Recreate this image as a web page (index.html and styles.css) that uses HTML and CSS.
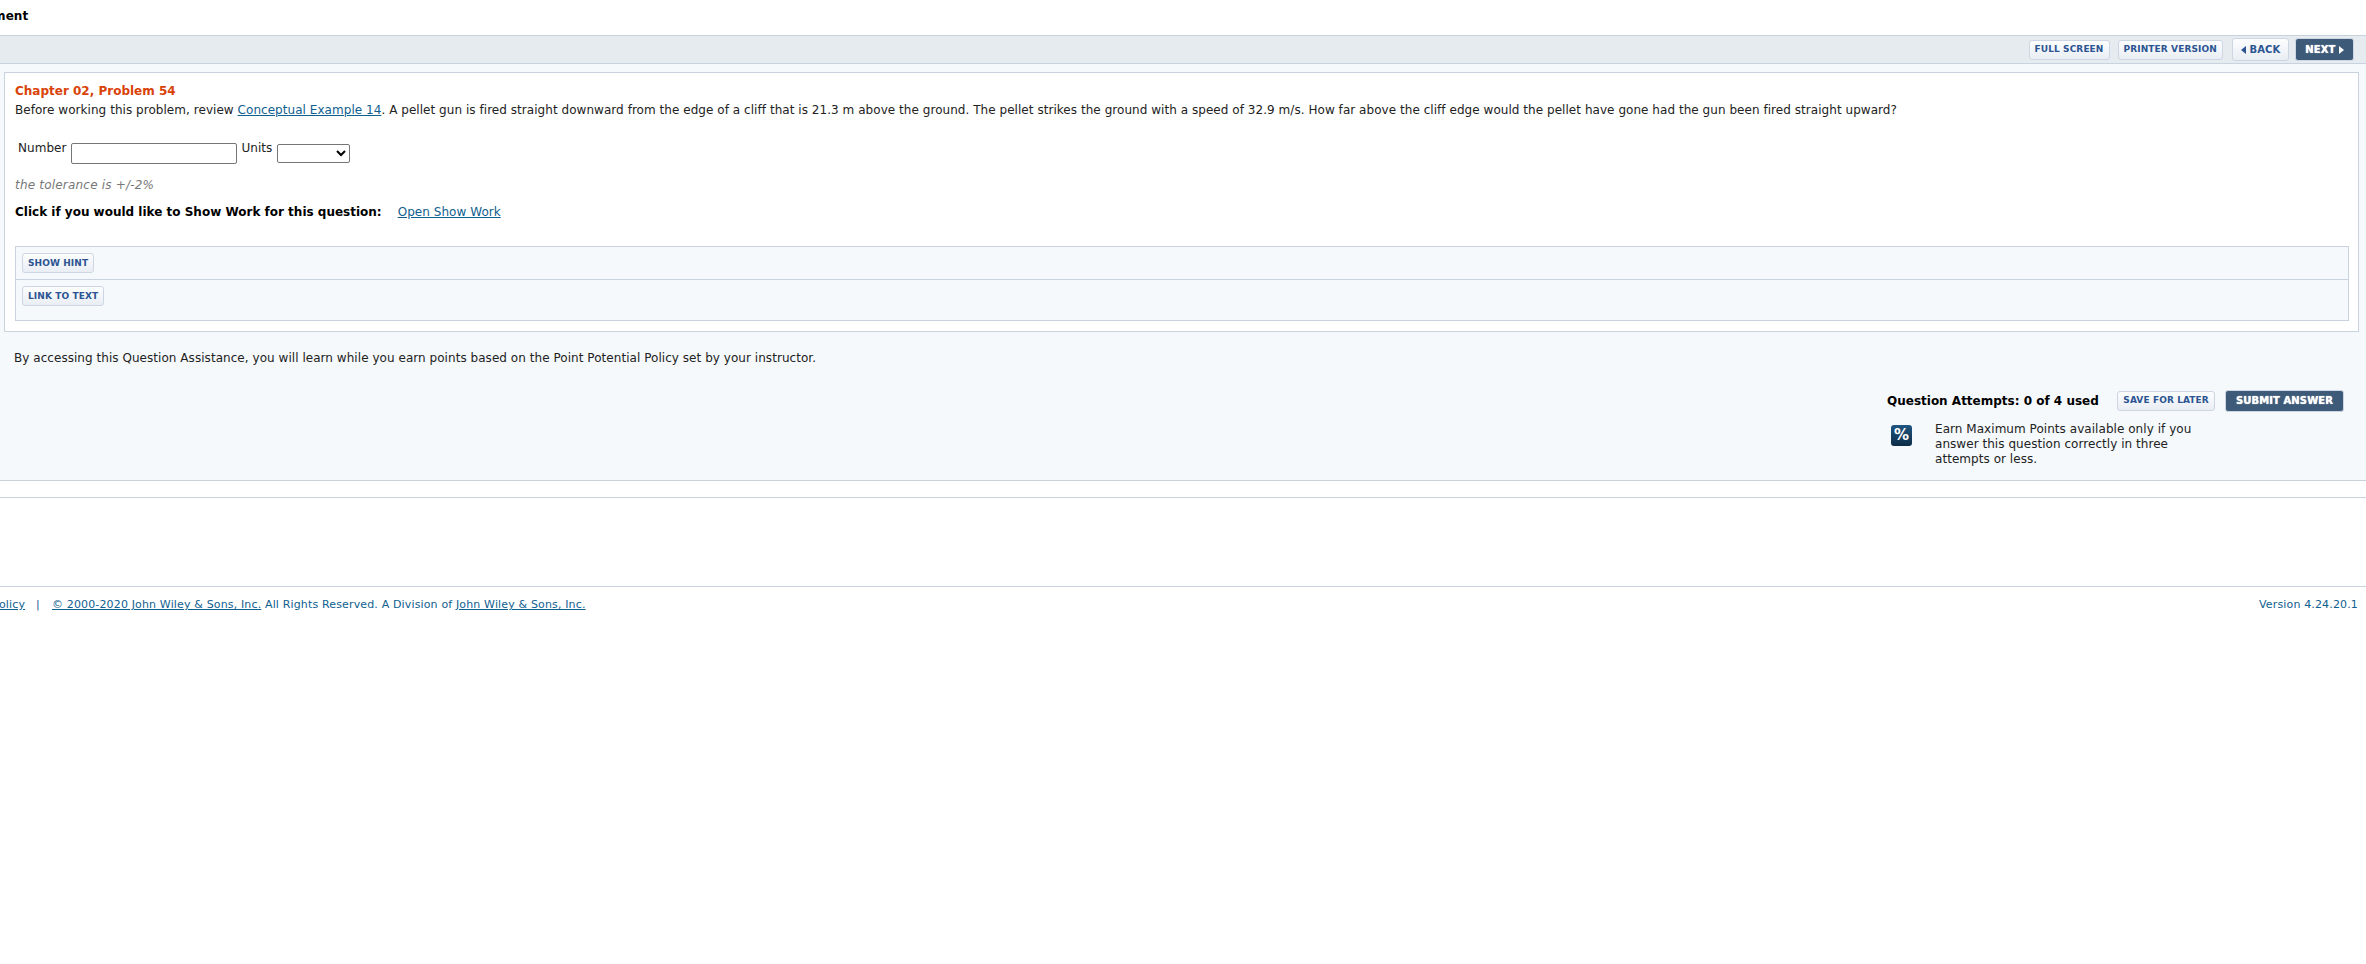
FILE: index.html
```html
<!DOCTYPE html>
<html lang="en">
<head>
<meta charset="utf-8">
<title>Chapter 02, Problem 54</title>
<link rel="stylesheet" href="styles.css">
</head>
<body>
<header class="top"><span class="top-title">Assignment</span></header>
<nav class="toolbar">
  <a class="btn">FULL SCREEN</a>
  <a class="btn">PRINTER VERSION</a>
  <a class="btn btn-big"><svg class="arrow" viewBox="0 0 5 8" width="5" height="8"><path d="M5 0v8L0 4z" fill="#2c5491"/></svg> BACK</a>
  <a class="btn btn-big btn-dark">NEXT <svg class="arrow" viewBox="0 0 5 8" width="5" height="8"><path d="M0 0v8l5-4z" fill="#fff"/></svg></a>
</nav>
<main class="assist">
  <section class="card">
    <h1 class="title">Chapter 02, Problem 54</h1>
    <p class="question">Before working this problem, review <a class="link">Conceptual Example 14</a>. A pellet gun is fired straight downward from the edge of a cliff that is 21.3 m above the ground. The pellet strikes the ground with a speed of 32.9 m/s. How far above the cliff edge would the pellet have gone had the gun been fired straight upward?</p>
    <div class="answer">
      <label class="answer-label">Number</label>
      <input class="number" type="text">
      <label class="answer-label">Units</label>
      <select class="units"><option></option></select>
    </div>
    <p class="tolerance">the tolerance is +/-2%</p>
    <p class="showwork"><b class="strong">Click if you would like to Show Work for this question:</b><a class="link work-link">Open Show Work</a></p>
    <div class="tools">
      <div class="tool-row"><a class="btn">SHOW HINT</a></div>
      <div class="tool-row tool-last"><a class="btn">LINK TO TEXT</a></div>
    </div>
  </section>
  <p class="policy">By accessing this Question Assistance, you will learn while you earn points based on the Point Potential Policy set by your instructor.</p>
  <div class="submit">
    <div class="submit-inner">
      <div class="submit-row">
        <b class="attempts strong">Question Attempts: 0 of 4 used</b>
        <a class="btn">SAVE FOR LATER</a>
        <a class="btn btn-big btn-dark btn-submit">SUBMIT ANSWER</a>
      </div>
      <div class="earn">
        <span class="pct">%</span>
        <span class="earn-text">Earn Maximum Points available only if you answer this question correctly in three attempts or less.</span>
      </div>
    </div>
  </div>
</main>
<div class="spacer"></div>
<footer class="footer">
  <span class="foot-left"><a class="link">Privacy Policy</a><span class="sep">|</span><a class="link">© 2000-2020 John Wiley &amp; Sons, Inc.</a> All Rights Reserved. A Division of <a class="link">John Wiley &amp; Sons, Inc.</a></span>
  <span class="version">Version 4.24.20.1</span>
</footer>
</body>
</html>
```
FILE: styles.css
```css
html, body { margin: 0; padding: 0; background: #fff; overflow: hidden; }
body { font: 12px/15px Verdana, "DejaVu Sans", sans-serif; letter-spacing: .045px; color: #222; height: 964px; }
.top { height: 35px; border-bottom: 1px solid #c9d2dc; overflow: hidden; }
.top-title { display: block; margin-left: -52px; padding-top: 9px; font-weight: bold; color: #000; }
.toolbar { height: 27px; background: #e6ebef; border-bottom: 1px solid #c9d3e0; display: flex; justify-content: flex-end; align-items: center; gap: 8px; padding-right: 12px; }
.btn { display: inline-block; box-sizing: border-box; height: 20px; line-height: 17px; padding: 0 5px; border: 1px solid #cdd6e2; border-radius: 3px; background: linear-gradient(#fcfdfe, #e9eef4); color: #2c5491; font-size: 9px; letter-spacing: .1px; font-weight: bold; white-space: nowrap; }
.toolbar .btn-big { height: 23px; line-height: 21px; padding: 0 8px; margin-left: 1px; font-size: 10px; }
.btn-dark { background: #3d5b78; border-color: #cdd6e2; color: #fff; text-shadow: 0 0 1px #fff; }
.toolbar .btn-dark { margin-left: -2px; padding: 0 9px; }
.arrow { vertical-align: -0.5px; }
.assist { background: #f5f9fc; height: 417px; border-bottom: 1px solid #c9d2dc; padding-top: 8px; box-sizing: border-box; }
.card { margin: 0 7px 0 4px; height: 260px; box-sizing: border-box; border: 1px solid #c9d3e0; background: #fff; padding: 11px 9px 0 10px; }
.title { margin: 0; font-size: 12px; line-height: 15px; font-weight: bold; letter-spacing: 0; color: #d9430a; }
.question { margin: 4px 0 0; }
.link { color: #10608f; text-decoration: underline; }
.answer { display: flex; align-items: flex-start; margin: 25px 0 0 3px; height: 35px; }
.answer-label { margin-top: -2px; }
.number { box-sizing: border-box; width: 166px; height: 21px; margin: 0 4px 0 5px; padding: 0; border: 1px solid #767676; border-radius: 2px; background: #fff; }
.units { box-sizing: border-box; width: 73px; height: 19px; margin: 1px 0 0 5px; border: 1px solid #767676; border-radius: 2px; background: #fff; }
.tolerance { margin: 0; font-style: italic; letter-spacing: .2px; color: #777; }
.showwork { margin: 12px 0 0; color: #000; }
.strong { letter-spacing: 0; }
.work-link { margin-left: 16px; }
.tools { margin-top: 26px; height: 75px; box-sizing: border-box; border: 1px solid #c9d3e0; background: #f5f9fc; }
.tool-row { height: 33px; box-sizing: border-box; border-bottom: 1px solid #c9d3e0; padding: 6px 0 0 6px; }
.tool-row .btn { line-height: 18px; }
.tool-last { border-bottom: 0; }
.policy { margin: 19px 0 0 14px; }
.submit { display: flex; justify-content: flex-end; margin-top: 24px; padding-right: 22px; }
.submit-inner { width: 457px; }
.submit-row { display: flex; align-items: center; }
.attempts { color: #000; width: 231px; }
.btn-submit { margin-left: 10px; height: 22px; line-height: 20px; padding: 0 10px; font-size: 10px; }
.earn { display: flex; margin-top: 10px; }
.pct { box-sizing: border-box; width: 21px; height: 21px; margin: 3px 0 0 4px; border-radius: 3px; background: linear-gradient(#1f5681, #0d2c47); color: #fff; font-size: 15px; line-height: 20px; font-weight: bold; text-align: center; letter-spacing: 0; }
.earn-text { width: 265px; margin-left: 23px; }
.spacer { height: 16px; border-bottom: 1px solid #c9d2dc; }
.footer { display: flex; justify-content: space-between; margin-top: 88px; padding: 10px 8px 0 0; border-top: 1px solid #c9d3e0; color: #10608f; font-size: 11px; letter-spacing: .15px; line-height: 15px; }
.foot-left { margin-left: -52px; }
.sep { margin: 0 12px 0 11px; color: #2c5491; }
```
